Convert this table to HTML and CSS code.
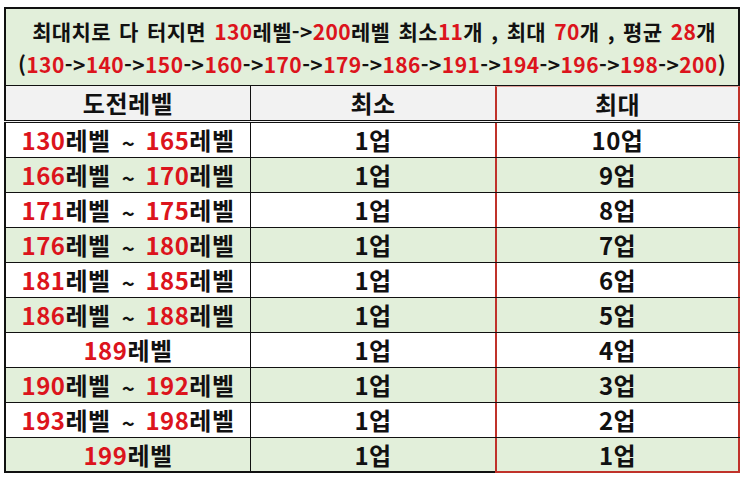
FILE: index.html
```html
<!DOCTYPE html>
<html lang="ko">
<head>
<meta charset="utf-8">
<link rel="stylesheet" href="styles.css">
</head>
<body>
<div class="sheet">
  <div class="title">
    <div class="line1">최대치로 다 터지면 <span class="r">130</span>레벨-&gt;<span class="r">200</span>레벨 최소<span class="r">11</span>개 , 최대 <span class="r">70</span>개 , 평균 <span class="r">28</span>개</div>
    <div class="line2">(<span class="r">130</span>-&gt;<span class="r">140</span>-&gt;<span class="r">150</span>-&gt;<span class="r">160</span>-&gt;<span class="r">170</span>-&gt;<span class="r">179</span>-&gt;<span class="r">186</span>-&gt;<span class="r">191</span>-&gt;<span class="r">194</span>-&gt;<span class="r">196</span>-&gt;<span class="r">198</span>-&gt;<span class="r">200</span>)</div>
  </div>
  <div class="grid">
    <div class="row head"><div class="c c1">도전레벨</div><div class="c c2">최소</div><div class="c c3">최대</div></div>
    <div class="row"><div class="c c1"><span class="r">130</span>레벨 <span class="t">~</span> <span class="r">165</span>레벨</div><div class="c c2">1업</div><div class="c c3">10업</div></div>
    <div class="row g"><div class="c c1"><span class="r">166</span>레벨 <span class="t">~</span> <span class="r">170</span>레벨</div><div class="c c2">1업</div><div class="c c3">9업</div></div>
    <div class="row"><div class="c c1"><span class="r">171</span>레벨 <span class="t">~</span> <span class="r">175</span>레벨</div><div class="c c2">1업</div><div class="c c3">8업</div></div>
    <div class="row g"><div class="c c1"><span class="r">176</span>레벨 <span class="t">~</span> <span class="r">180</span>레벨</div><div class="c c2">1업</div><div class="c c3">7업</div></div>
    <div class="row"><div class="c c1"><span class="r">181</span>레벨 <span class="t">~</span> <span class="r">185</span>레벨</div><div class="c c2">1업</div><div class="c c3">6업</div></div>
    <div class="row g"><div class="c c1"><span class="r">186</span>레벨 <span class="t">~</span> <span class="r">188</span>레벨</div><div class="c c2">1업</div><div class="c c3">5업</div></div>
    <div class="row"><div class="c c1"><span class="r">189</span>레벨</div><div class="c c2">1업</div><div class="c c3">4업</div></div>
    <div class="row g"><div class="c c1"><span class="r">190</span>레벨 <span class="t">~</span> <span class="r">192</span>레벨</div><div class="c c2">1업</div><div class="c c3">3업</div></div>
    <div class="row"><div class="c c1"><span class="r">193</span>레벨 <span class="t">~</span> <span class="r">198</span>레벨</div><div class="c c2">1업</div><div class="c c3">2업</div></div>
    <div class="row g last"><div class="c c1"><span class="r">199</span>레벨</div><div class="c c2">1업</div><div class="c c3">1업</div></div>
  </div>
</div>
</body>
</html>
```

FILE: styles.css
```css
html, body {
  margin: 0;
  padding: 0;
  background: #ffffff;
}
body {
  font-family: "Noto Sans CJK KR", "Noto Sans", sans-serif;
  font-weight: 700;
  color: #111111;
}
.sheet {
  width: 736px;
  margin: 7px 0 0 4px;
}
.r {
  color: #dc141c;
}
.title {
  height: 79px;
  background: #e2efda;
  border: 2px solid #111;
  border-bottom: 1px solid #111;
  box-sizing: border-box;
  display: flex;
  flex-direction: column;
  align-items: center;
  justify-content: center;
  gap: 3px;
  font-size: 21px;
  line-height: 30px;
  white-space: nowrap;
}
.line1 {
  letter-spacing: 0.35px;
  word-spacing: 2px;
  padding-left: 4px;
}
.line2 {
  letter-spacing: 0.4px;
}
.grid {
  display: flex;
  flex-direction: column;
}
.row {
  display: grid;
  grid-template-columns: 247px 244px 245px;
  height: 35px;
  box-sizing: border-box;
  border-bottom: 1px solid #111;
  background: #ffffff;
}
.row.g {
  background: #e2efda;
}
.row.head {
  background: #f2f2f2;
  height: 37px;
  border-bottom: 3px double #111;
}
.row.last {
  border-bottom: 2px solid #111;
}
.c {
  display: flex;
  align-items: center;
  justify-content: center;
  font-size: 24px;
  line-height: 1;
  letter-spacing: 0.5px;
  box-sizing: border-box;
  white-space: pre;
}
.t {
  display: inline-block;
  font-size: 22px;
  padding: 3px 10px 0 4px;
}
.c1 {
  border-left: 2px solid #111;
  border-right: 1px solid #111;
}
.c3 {
  border-left: 2px solid #c0322a;
  border-right: 2px solid #c0322a;
}
.row.last .c3 {
  border-bottom: 2px solid #c0322a;
  margin-bottom: -2px;
}
.row.head .c3 {
  border-top: 1px solid #e0a09a;
}
```
